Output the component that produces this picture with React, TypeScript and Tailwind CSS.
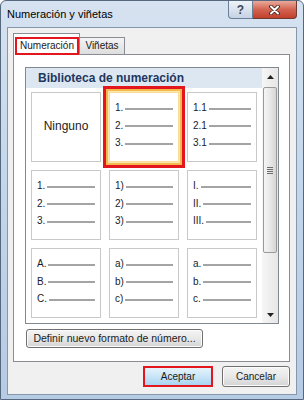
import React from "react";

const FONT = { fontFamily: '"Liberation Sans", Arial, sans-serif' };

type CellProps = { labels?: string[]; text?: string; selected?: boolean };

function Cell({ labels, text, selected }: CellProps) {
  const base =
    "w-[70px] h-[70px] bg-white border flex flex-col justify-center pl-[5px] pr-[5px] pb-[3px]";
  const cls = selected
    ? base +
      " border-[#f9dc98] shadow-[0_0_0_1px_#fce7ad,0_0_0_3px_#f5b84f,0_0_0_6px_#e3161d]"
    : base + " border-[#c9c9c9]";
  if (text) {
    return (
      <div className={cls + " items-center pb-0"}>
        <span className="text-[12px] text-[#1c1c1c] leading-none">{text}</span>
      </div>
    );
  }
  return (
    <div className={cls}>
      {labels!.map((l) => (
        <div key={l} className="h-[17.5px] flex items-center gap-[2px]">
          <span className="text-[10px] leading-none text-[#1a1a2a]">{l}</span>
          <div className="flex-1 h-[2px] bg-[#a4a4a4] mt-[1px]" />
        </div>
      ))}
    </div>
  );
}

export default function App() {
  return (
    <div
      className="w-[304px] h-[400px] flex flex-col border border-[#56687e] rounded-t-[6px] overflow-hidden bg-gradient-to-b from-[#d6e2f0] via-[#c2d5ea] to-[#b6cbe4]"
      style={FONT}
    >
      {/* title bar */}
      <div className="h-[26px] shrink-0 flex items-start pl-[6px] pr-[6px]">
        <div className="pt-[7px] text-[11px] leading-[13px] text-black">
          Numeración y viñetas
        </div>
        <div className="ml-auto flex">
          <div className="w-[25px] h-[18px] border border-t-0 border-[#6b7f99] rounded-bl-[4px] bg-gradient-to-b from-[#eef3f9] via-[#dae3ee] to-[#c4d2e3] flex items-center justify-center">
            <span className="text-[12px] font-bold text-[#3b485a] leading-none">?</span>
          </div>
          <div className="w-[44px] h-[18px] border border-t-0 border-l-0 border-[#6e3a33] rounded-br-[4px] bg-gradient-to-b from-[#e9a99b] via-[#d26350] to-[#c23f2a] flex items-center justify-center">
            <svg width="13" height="10" viewBox="0 0 13 10">
              <path d="M3 1.5 L10 8.5 M10 1.5 L3 8.5" stroke="#4a2420" strokeWidth="3.8" strokeLinecap="round" />
              <path d="M3 1.5 L10 8.5 M10 1.5 L3 8.5" stroke="#ffffff" strokeWidth="2" strokeLinecap="round" />
            </svg>
          </div>
        </div>
      </div>

      {/* client area */}
      <div className="flex-1 mx-[6px] mb-[4px] bg-[#f0f0f0] border border-[#8497ad] flex flex-col pt-[5px] pl-[5px]">
        {/* tabs */}
        <div className="flex items-end h-[22px]">
          <div className="relative z-10 w-[67px] h-[22px] bg-white border border-b-0 border-[#898c95] pl-[1px] pt-[3px]">
            <div className="w-[64px] h-[18px] border-2 border-[#e3161d] flex items-center justify-center">
              <span className="text-[10px] leading-none text-[#1a1a1a]">Numeración</span>
            </div>
          </div>
          <div className="w-[45px] h-[18px] border-t border-r border-[#898c95] bg-gradient-to-b from-[#f4f4f4] to-[#dcdcdc] flex items-center justify-center pb-[1px]">
            <span className="text-[10px] leading-none text-[#1a1a1a]">Viñetas</span>
          </div>
        </div>

        {/* tab panel */}
        <div className="-mt-[1px] w-[277px] h-[308px] bg-white border border-[#898c95] pl-[11px] pt-[12px] flex flex-col">
          <div className="w-[254px] h-[257px] border border-[#828790] flex overflow-hidden">
            <div className="w-[236px] flex flex-col overflow-hidden">
              <div className="h-[20px] shrink-0 bg-[#dde7f2] flex items-center pl-[12px]">
                <span className="text-[12px] font-bold text-[#1e3760] leading-none">
                  Biblioteca de numeración
                </span>
              </div>
              <div className="grid grid-cols-[70px_70px_70px] gap-[8px] pl-[5px] pt-[4px]">
                <Cell text="Ninguno" />
                <Cell labels={["1.", "2.", "3."]} selected />
                <Cell labels={["1.1", "2.1", "3.1"]} />
                <Cell labels={["1.", "2.", "3."]} />
                <Cell labels={["1)", "2)", "3)"]} />
                <Cell labels={["I.", "II.", "III."]} />
                <Cell labels={["A.", "B.", "C."]} />
                <Cell labels={["a)", "b)", "c)"]} />
                <Cell labels={["a.", "b.", "c."]} />
              </div>
            </div>
            {/* scrollbar */}
            <div className="w-[16px] bg-gradient-to-r from-[#f6f6f6] to-[#e6e6e6] flex flex-col items-center">
              <div className="h-[17px] w-full flex items-center justify-center">
                <svg width="7" height="4" viewBox="0 0 7 4">
                  <path d="M0 4 L3.5 0 L7 4 Z" fill="#222" />
                </svg>
              </div>
              <div className="mt-[2px] w-[14px] h-[166px] rounded-[2px] border border-[#9a9a9a] bg-gradient-to-r from-[#f5f5f5] via-[#e8e8e8] to-[#d6d6d6] flex flex-col items-center justify-center gap-[1px]">
                <div className="w-[6px] h-[1px] bg-[#6e6e6e]" />
                <div className="w-[6px] h-[1px] bg-[#6e6e6e]" />
                <div className="w-[6px] h-[1px] bg-[#6e6e6e]" />
                <div className="w-[6px] h-[1px] bg-[#6e6e6e]" />
              </div>
              <div className="mt-auto h-[17px] w-full flex items-center justify-center">
                <svg width="7" height="4" viewBox="0 0 7 4">
                  <path d="M0 0 L7 0 L3.5 4 Z" fill="#222" />
                </svg>
              </div>
            </div>
          </div>

          <div className="mt-[5px] ml-[1px] w-[177px] h-[19px] rounded-[3px] border border-[#707070] bg-gradient-to-b from-[#f4f4f4] via-[#e8e8e8] to-[#d4d4d4] shadow-[inset_0_0_0_1px_#fbfbfb] flex items-center justify-center">
            <span className="text-[10.5px] leading-none text-[#1a1a1a]">
              Definir nuevo formato de número...
            </span>
          </div>
        </div>

        {/* bottom buttons */}
        <div className="mt-[4px] w-[277px] flex justify-end gap-[9px]">
          <div className="w-[70px] h-[21px] border-2 border-[#e3161d] bg-gradient-to-b from-[#e5f3fb] via-[#c9e5f7] to-[#a9d4f1] flex items-center justify-center">
            <span className="text-[10px] leading-none text-[#1a1a1a]">Aceptar</span>
          </div>
          <div className="w-[68px] h-[21px] rounded-[3px] border border-[#707070] bg-gradient-to-b from-[#f4f4f4] via-[#e8e8e8] to-[#d4d4d4] shadow-[inset_0_0_0_1px_#fbfbfb] flex items-center justify-center">
            <span className="text-[10px] leading-none text-[#1a1a1a]">Cancelar</span>
          </div>
        </div>
      </div>
    </div>
  );
}
